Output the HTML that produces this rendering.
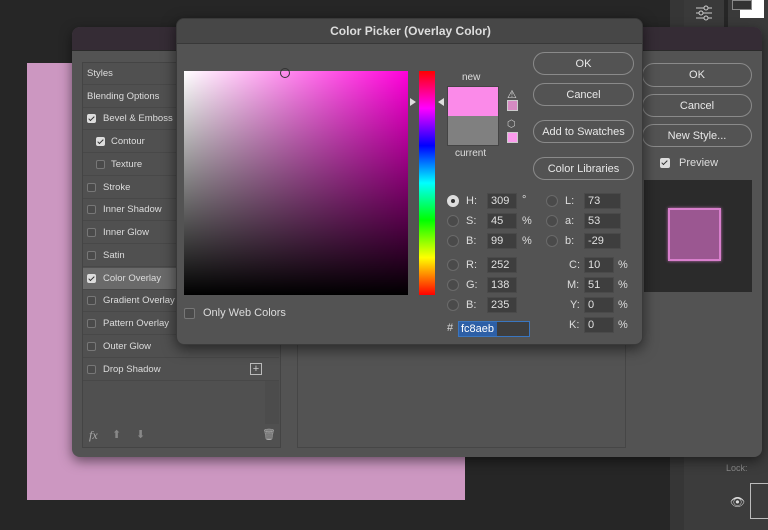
<!DOCTYPE html>
<html><head><meta charset="utf-8"><style>
*{box-sizing:border-box;margin:0;padding:0}
body{width:768px;height:530px;overflow:hidden;background:#262626;font-family:"Liberation Sans",sans-serif;font-size:10px;color:#ddd;position:relative}
.a{position:absolute}
.btn{position:absolute;border:1.5px solid #8a8a8a;border-radius:12px;color:#e8e8e8;font-size:11px;display:flex;align-items:center;justify-content:center}
.row{position:absolute;left:83px;width:196px;height:22px;border-bottom:1px solid #484848;font-size:9.5px;color:#ddd;line-height:22px}
.cb{position:absolute;width:9px;height:9px;border:1px solid #777;border-radius:2px;top:6px;background:#4a4a4a}
.cb.on{background:#ddd;border-color:#ddd}
.cb.on:after{content:"";position:absolute;left:2px;top:0px;width:2px;height:5px;border:solid #333;border-width:0 1.5px 1.5px 0;transform:rotate(45deg)}
.fld{position:absolute;background:#3e3e3e;border:1px solid #4a4a4a;height:16px;font-size:11px;color:#e0e0e0;line-height:14px;padding-left:3px}
.lbl{position:absolute;font-size:11px;color:#ddd}
.rad{position:absolute;width:12px;height:12px;border-radius:50%;border:1px solid #6a6a6a;background:#4a4a4a}
</style></head><body>
<!-- right strip -->
<div class="a" style="left:670px;top:0;width:50px;height:530px;background:#363636"></div>
<div class="a" style="left:684px;top:0;width:40px;height:30px;background:#3a3a3a"></div>
<svg class="a" style="left:695px;top:5px" width="18" height="16"><g stroke="#ccc" fill="none" stroke-width="1"><line x1="1" y1="3" x2="17" y2="3"/><line x1="1" y1="8" x2="17" y2="8"/><line x1="1" y1="13" x2="17" y2="13"/><circle cx="11" cy="3" r="2" fill="#3a3a3a"/><circle cx="6" cy="8" r="2" fill="#3a3a3a"/><circle cx="11" cy="13" r="2" fill="#3a3a3a"/></g></svg>
<div class="a" style="left:728px;top:0;width:40px;height:530px;background:#3a3a3a"></div>
<div class="a" style="left:740px;top:0;width:24px;height:18px;background:#fff"></div>
<div class="a" style="left:732px;top:0;width:20px;height:10px;background:#333;border:1px solid #888"></div>
<div class="a" style="left:684px;top:440px;width:84px;height:90px;background:#3c3c3c"></div>
<div class="a" style="left:726px;top:463px;font-size:9px;color:#888">Lock:</div>
<div class="a" style="left:730px;top:495px;font-size:12px;color:#ddd">👁</div>
<div class="a" style="left:750px;top:483px;width:18px;height:36px;border:1.5px solid #bbb;border-right:none"></div>
<!-- pink canvas -->
<div class="a" style="left:27px;top:63px;width:438px;height:437px;background:#cc97c1"></div>
<!-- layer style dialog -->
<div class="a" style="left:72px;top:27px;width:690px;height:430px;background:#535353;border-radius:8px;box-shadow:0 4px 12px rgba(0,0,0,.5);overflow:hidden">
  <div class="a" style="left:0;top:0;width:690px;height:24px;background:#352c35;border-bottom:1px solid #2a2a2a"></div>
</div>
<div class="a" style="left:82px;top:62px;width:199px;height:386px;border:1px solid #444;background:#505050"></div>
<div class="a" style="left:265px;top:380px;width:14px;height:44px;background:#4c4c4c"></div>
<div class="row" style="top:63px"><span style="margin-left:4px">Styles</span></div>
<div class="row" style="top:86px"><span style="margin-left:4px">Blending Options</span></div>
<div class="row" style="top:108px"><div class="cb on" style="left:4px"></div><span style="margin-left:20px">Bevel &amp; Emboss</span></div>
<div class="row" style="top:131px"><div class="cb on" style="left:13px"></div><span style="margin-left:28px">Contour</span></div>
<div class="row" style="top:154px"><div class="cb" style="left:13px"></div><span style="margin-left:28px">Texture</span></div>
<div class="row" style="top:177px"><div class="cb" style="left:4px"></div><span style="margin-left:20px">Stroke</span></div>
<div class="row" style="top:199px"><div class="cb" style="left:4px"></div><span style="margin-left:20px">Inner Shadow</span></div>
<div class="row" style="top:222px"><div class="cb" style="left:4px"></div><span style="margin-left:20px">Inner Glow</span></div>
<div class="row" style="top:245px"><div class="cb" style="left:4px"></div><span style="margin-left:20px">Satin</span></div>
<div class="row" style="top:268px;background:#6a6a6a"><div class="cb on" style="left:4px"></div><span style="margin-left:20px">Color Overlay</span></div>
<div class="row" style="top:290px"><div class="cb" style="left:4px"></div><span style="margin-left:20px">Gradient Overlay</span></div>
<div class="row" style="top:313px"><div class="cb" style="left:4px"></div><span style="margin-left:20px">Pattern Overlay</span></div>
<div class="row" style="top:336px"><div class="cb" style="left:4px"></div><span style="margin-left:20px">Outer Glow</span></div>
<div class="row" style="top:359px"><div class="cb" style="left:4px"></div><span style="margin-left:20px">Drop Shadow</span><div class="a" style="left:167px;top:4px;width:12px;height:12px;border:1px solid #bbb;color:#ccc;font-size:11px;line-height:10px;text-align:center">+</div></div>
<div class="a" style="left:89px;top:428px;font-size:12px;color:#aaa;font-style:italic;font-family:'Liberation Serif',serif">fx</div>
<div class="a" style="left:112px;top:428px;font-size:11px;color:#888">⬆</div>
<div class="a" style="left:136px;top:428px;font-size:11px;color:#888">⬇</div>
<div class="a" style="left:262px;top:428px;font-size:11px;color:#aaa">🗑</div>
<div class="a" style="left:297px;top:330px;width:329px;height:118px;border:1px solid #464646"></div>
<div class="btn" style="left:642px;top:63px;width:110px;height:24px">OK</div>
<div class="btn" style="left:642px;top:94px;width:110px;height:23px">Cancel</div>
<div class="btn" style="left:642px;top:124px;width:110px;height:23px">New Style...</div>
<div class="cb on" style="left:660px;top:158px;width:10px;height:10px"></div>
<div class="a" style="left:679px;top:157px;font-size:11px;color:#ddd">Preview</div>
<div class="a" style="left:644px;top:180px;width:108px;height:112px;background:#2b2b2b"></div>
<div class="a" style="left:668px;top:208px;width:53px;height:53px;background:#9b5791;border:2px solid #d87fcc;box-shadow:0 0 3px #c06bb5"></div>
<!-- color picker -->
<div class="a" style="left:176px;top:18px;width:467px;height:327px;background:#535353;border-radius:8px;box-shadow:0 4px 14px rgba(0,0,0,.55);overflow:hidden;border:1px solid #3a3a3a">
  <div class="a" style="left:0;top:0;width:467px;height:25px;background:#474747;border-bottom:1px solid #383838;text-align:center;line-height:24px;font-size:12px;font-weight:bold;color:#ddd">Color Picker (Overlay Color)</div>
</div>
<div class="a" style="left:184px;top:71px;width:224px;height:224px;background:linear-gradient(to bottom,rgba(0,0,0,0),#000),linear-gradient(to right,#fff,#ff00da)"></div>
<div class="a" style="left:280px;top:68px;width:10px;height:10px;border-radius:50%;border:1.5px solid #333"></div>
<div class="a" style="left:419px;top:71px;width:16px;height:224px;background:linear-gradient(to bottom,#f00 0%,#f0f 16.6%,#00f 33.3%,#0ff 50%,#0f0 66.6%,#ff0 83.3%,#f00 100%)"></div>
<div class="a" style="left:410px;top:98px;width:0;height:0;border-left:6px solid #ddd;border-top:4px solid transparent;border-bottom:4px solid transparent"></div>
<div class="a" style="left:438px;top:98px;width:0;height:0;border-right:6px solid #ddd;border-top:4px solid transparent;border-bottom:4px solid transparent"></div>
<div class="a" style="left:462px;top:72px;font-size:10px;color:#ddd">new</div>
<div class="a" style="left:447px;top:86px;width:52px;height:60px;border:1px solid #444"><div style="height:29px;background:#fb8ae9"></div><div style="height:29px;background:#808080"></div></div>
<div class="a" style="left:455px;top:148px;font-size:10px;color:#ddd">current</div>
<div class="a" style="left:507px;top:88px;font-size:11px;color:#ddd">⚠</div>
<div class="a" style="left:507px;top:100px;width:11px;height:11px;background:#d58bc2;border:1px solid #ccc"></div>
<div class="a" style="left:507px;top:119px;font-size:10px;color:#ccc">⬡</div>
<div class="a" style="left:507px;top:132px;width:11px;height:11px;background:#fb9bed;border:1px solid #ccc"></div>
<div class="btn" style="left:533px;top:52px;width:101px;height:23px">OK</div>
<div class="btn" style="left:533px;top:83px;width:101px;height:23px">Cancel</div>
<div class="btn" style="left:533px;top:120px;width:101px;height:23px">Add to Swatches</div>
<div class="btn" style="left:533px;top:157px;width:101px;height:23px">Color Libraries</div>
<!-- fields -->
<div class="rad" style="left:447px;top:195px;background:#ddd;border-color:#ddd"><div style="width:4px;height:4px;background:#333;border-radius:50%;margin:3px"></div></div>
<div class="rad" style="left:447px;top:215px"></div><div class="rad" style="left:447px;top:235px"></div>
<div class="rad" style="left:447px;top:259px"></div><div class="rad" style="left:447px;top:279px"></div><div class="rad" style="left:447px;top:299px"></div>
<div class="rad" style="left:546px;top:195px"></div><div class="rad" style="left:546px;top:215px"></div><div class="rad" style="left:546px;top:235px"></div>
<div class="lbl" style="left:466px;top:195px">H:</div><div class="fld" style="left:487px;top:193px;width:30px">309</div><div class="lbl" style="left:522px;top:194px">°</div>
<div class="lbl" style="left:466px;top:215px">S:</div><div class="fld" style="left:487px;top:213px;width:30px">45</div><div class="lbl" style="left:522px;top:215px">%</div>
<div class="lbl" style="left:466px;top:235px">B:</div><div class="fld" style="left:487px;top:233px;width:30px">99</div><div class="lbl" style="left:522px;top:235px">%</div>
<div class="lbl" style="left:466px;top:259px">R:</div><div class="fld" style="left:487px;top:257px;width:30px">252</div>
<div class="lbl" style="left:466px;top:279px">G:</div><div class="fld" style="left:487px;top:277px;width:30px">138</div>
<div class="lbl" style="left:466px;top:299px">B:</div><div class="fld" style="left:487px;top:297px;width:30px">235</div>
<div class="lbl" style="left:565px;top:195px">L:</div><div class="fld" style="left:584px;top:193px;width:37px">73</div>
<div class="lbl" style="left:565px;top:215px">a:</div><div class="fld" style="left:584px;top:213px;width:37px">53</div>
<div class="lbl" style="left:565px;top:235px">b:</div><div class="fld" style="left:584px;top:233px;width:37px">-29</div>
<div class="lbl" style="left:569px;top:259px">C:</div><div class="fld" style="left:584px;top:257px;width:30px">10</div><div class="lbl" style="left:618px;top:259px">%</div>
<div class="lbl" style="left:567px;top:279px">M:</div><div class="fld" style="left:584px;top:277px;width:30px">51</div><div class="lbl" style="left:618px;top:279px">%</div>
<div class="lbl" style="left:570px;top:299px">Y:</div><div class="fld" style="left:584px;top:297px;width:30px">0</div><div class="lbl" style="left:618px;top:299px">%</div>
<div class="lbl" style="left:569px;top:319px">K:</div><div class="fld" style="left:584px;top:317px;width:30px">0</div><div class="lbl" style="left:618px;top:319px">%</div>
<div class="lbl" style="left:447px;top:322px">#</div>
<div class="a" style="left:458px;top:321px;width:72px;height:16px;border:1px solid #3a76c0;background:#3e3e3e"><div style="width:38px;height:14px;background:#2d5fa6;font-size:11px;color:#fff;line-height:14px;padding-left:2px">fc8aeb</div></div>
<div class="cb" style="left:184px;top:308px;width:11px;height:11px"></div>
<div class="a" style="left:203px;top:307px;font-size:11px;color:#ddd">Only Web Colors</div>
</body></html>
